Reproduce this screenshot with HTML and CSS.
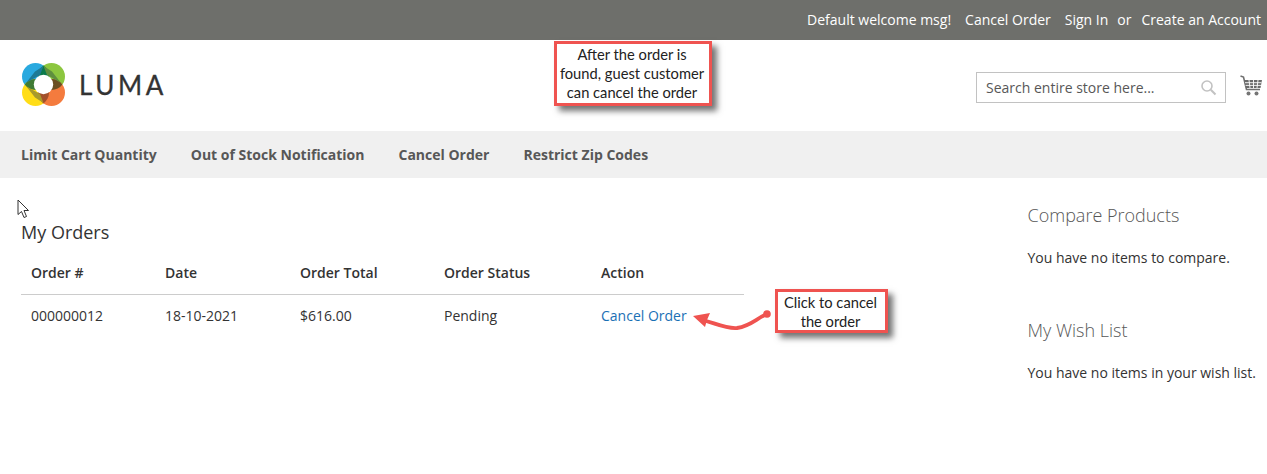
FILE: index.html
```html
<!DOCTYPE html>
<html lang="en">
<head>
<meta charset="utf-8">
<title>My Orders</title>
<link rel="stylesheet" href="styles.css">
</head>
<body>
<div class="topbar">
  <span>Default welcome msg!</span>
  <a>Cancel Order</a>
  <a>Sign In</a>
  <span class="or">or</span>
  <a>Create an Account</a>
</div>
<header class="header">
  <div class="logo">
    <svg class="logo-mark" width="43" height="43" viewBox="0 0 43 43">
      <circle cx="13.5" cy="13.5" r="13.5" fill="#29a9df"/>
      <circle cx="29.5" cy="13.5" r="13.5" fill="#8cc63f"/>
      <circle cx="13.5" cy="29.5" r="13.5" fill="#ffdd17"/>
      <circle cx="29.5" cy="29.5" r="13.5" fill="#f47b3e"/>
      <path d="M21.5 2.6A13.5 13.5 0 0 1 21.5 24.4A13.5 13.5 0 0 1 21.5 2.6Z" fill="#0b7a4b"/>
      <path d="M2.6 21.5A13.5 13.5 0 0 1 24.4 21.5A13.5 13.5 0 0 1 2.6 21.5Z" fill="#3f7b35"/>
      <path d="M18.6 21.5A13.5 13.5 0 0 1 40.4 21.5A13.5 13.5 0 0 1 18.6 21.5Z" fill="#6b4f22"/>
      <path d="M21.5 18.6A13.5 13.5 0 0 1 21.5 40.4A13.5 13.5 0 0 1 21.5 18.6Z" fill="#a4502a"/>
      <path d="M13 8.5L21.5 3L18 12L9 17L4 20Z" fill="#1d7a95"/>
      <path d="M30 8.5L21.5 3L25 12L34 17L39 20Z" fill="#5f8f3f"/>
      <path d="M13 34.5L21.5 40L18 31L9 26L4 23Z" fill="#a89a2c"/>
      <circle cx="21.5" cy="21.5" r="9.7" fill="#fff"/>
    </svg>
    <span class="logo-word">LUMA</span>
  </div>
  <div class="callout callout-top">After the order is<br>found, guest customer<br>can cancel the order</div>
  <div class="tools">
    <div class="search">
      <span class="search-text">Search entire store here...</span>
      <svg width="17" height="17" viewBox="0 0 17 17" class="search-icon"><circle cx="7" cy="7" r="5" fill="none" stroke="#c2c2c2" stroke-width="1.6"/><path d="M10.8 10.8L15.5 15.5" stroke="#c2c2c2" stroke-width="2"/></svg>
    </div>
    <svg class="cart" width="22" height="22" viewBox="0 0 22 22">
      <path d="M0.5 1L3.5 2L6.5 14.5H20" fill="none" stroke="#6f6f6f" stroke-width="1.6"/>
      <path d="M4 5H22L20.5 13H6Z" fill="#6a6a6a"/>
      <path d="M9 5L10 13M13.5 5V13M18 5L17 13M5 7.7H21.5M5.6 10.4H21" stroke="#fff" stroke-width=".9"/>
      <circle cx="8.5" cy="18.5" r="2" fill="#757575"/>
      <circle cx="16.5" cy="18.5" r="2" fill="#757575"/>
    </svg>
  </div>
</header>
<nav class="nav">
  <a>Limit Cart Quantity</a>
  <a>Out of Stock Notification</a>
  <a>Cancel Order</a>
  <a>Restrict Zip Codes</a>
</nav>
<main class="main">
  <section class="content">
    <svg class="pointer" width="14" height="20" viewBox="0 0 14 20"><path d="M1 1V15.5L4.5 12.5L7 18.5L9.5 17.5L7 11.5H11.5Z" fill="#fff" stroke="#333" stroke-width="1"/></svg>
    <h1 class="title">My Orders</h1>
    <table class="orders">
      <thead>
        <tr><th class="c1">Order #</th><th class="c2">Date</th><th class="c3">Order Total</th><th class="c4">Order Status</th><th>Action</th></tr>
      </thead>
      <tbody>
        <tr><td>000000012</td><td>18-10-2021</td><td>$616.00</td><td>Pending</td><td><a class="link">Cancel Order</a></td></tr>
      </tbody>
    </table>
    <svg class="arrow" width="80" height="30" viewBox="0 0 80 30">
      <path d="M76 9C66 13 60 21 46 23C36 24 26 19 12 15" fill="none" stroke="#ef5350" stroke-width="3.9" stroke-linecap="round"/>
      <circle cx="76" cy="9" r="3.8" fill="#ef5350"/>
      <path d="M2 11L19 8L16 15L14 22Z" fill="#ef5350"/>
    </svg>
    <div class="callout callout-row">Click to cancel<br>the order</div>
  </section>
  <aside class="side">
    <h2 class="side-title">Compare Products</h2>
    <p class="side-text">You have no items to compare.</p>
    <h2 class="side-title second">My Wish List</h2>
    <p class="side-text">You have no items in your wish list.</p>
  </aside>
</main>
</body>
</html>
```
FILE: styles.css
```css
* { box-sizing: border-box; }
html, body { margin: 0; padding: 0; }
body {
  width: 1267px;
  height: 474px;
  overflow: hidden;
  background: #fff;
  font-family: "Open Sans", sans-serif;
  font-size: 14px;
  color: #333;
}
.topbar {
  height: 40px;
  background: #6e6f6b;
  color: #fff;
  display: flex;
  justify-content: flex-end;
  align-items: center;
  gap: 14px;
  padding: 0 6px 2px 0;
  white-space: nowrap;
}
.or { margin: 0 -4px 0 -5px; }
.header {
  height: 91px;
  position: relative;
  display: flex;
  justify-content: space-between;
  align-items: center;
  padding-left: 22px;
  padding-right: 5px;
}
.logo { display: flex; align-items: center; gap: 14px; margin-top: -2px; }
.logo-word {
  font-family: "Lato", sans-serif;
  font-size: 26px;
  letter-spacing: 3.6px;
  -webkit-text-stroke: .3px #333;
  color: #333;
  line-height: 1;
}
.tools { display: flex; align-items: center; gap: 14px; margin-top: 3px; }
.search {
  width: 250px;
  height: 31px;
  border: 1px solid #c2c2c2;
  display: flex;
  align-items: center;
  justify-content: space-between;
  padding: 0 8px 0 9px;
  color: #575757;
}
.cart { margin-top: -3px; }
.callout {
  position: absolute;
  background: #fff;
  border: 3px solid #ef5350;
  box-shadow: 5px 5px 6px rgba(70,70,70,.75);
  font-family: "Lato", sans-serif;
  font-size: 14.7px;
  line-height: 19px;
  color: #222;
  text-align: center;
  white-space: nowrap;
}
.callout-top { left: 554px; top: 1px; width: 158px; height: 65px; padding: 1px 2px 0 0; }
.callout-row { left: 775px; top: 111px; width: 113px; height: 44px; padding: 1px 2px 0 0; }
.nav {
  height: 47px;
  background: #f0f0f0;
  display: flex;
  align-items: center;
  gap: 34px;
  padding-left: 21px;
  font-weight: 700;
  color: #575757;
  white-space: nowrap;
}
.main { display: flex; }
.content { position: relative; width: 1028px; padding: 42px 0 0 21px; }
.pointer { position: absolute; left: 17px; top: 21px; }
.title {
  margin: 0;
  font-size: 18px;
  font-weight: 500;
  line-height: 25px;
}
.orders {
  border-collapse: collapse;
  width: 723px;
  margin-top: 7px;
  table-layout: fixed;
}
.orders th, .orders td {
  padding: 0 10px;
  text-align: left;
}
.orders th { height: 42px; font-weight: 650; border-bottom: 1px solid #ccc; }
.orders td { height: 42px; }
.c1 { width: 134px; }
.c2 { width: 135px; }
.c3 { width: 144px; }
.c4 { width: 157px; }
.link { color: #1a70b5; }
.arrow { position: absolute; left: 691px; top: 127px; }
.side { padding-top: 25px; margin-left: -0.5px; }
.side-title {
  margin: 0;
  font-size: 18px;
  font-weight: 300;
  line-height: 24px;
  color: #575757;
}
.second { margin-top: 50px; }
.side-text { margin: 21px 0 0; line-height: 20px; white-space: nowrap; }
```
